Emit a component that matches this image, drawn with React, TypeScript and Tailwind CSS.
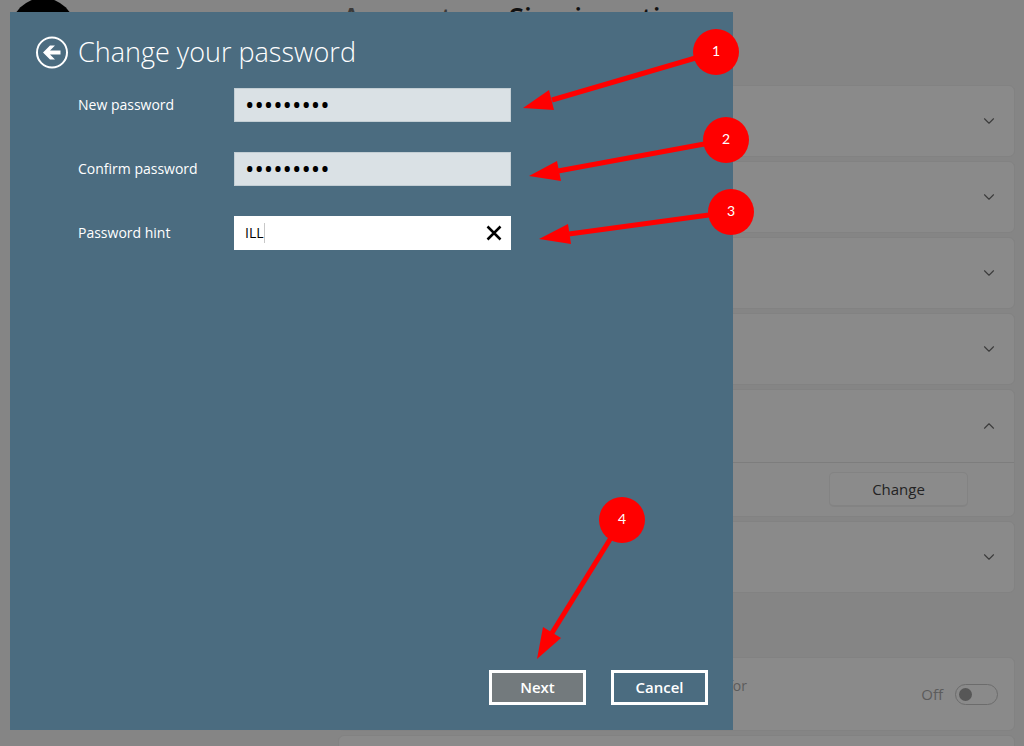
import { useState } from 'react';
import { ChevronDown, ChevronUp } from 'lucide-react';

const arrows = [
    { n: 1, cx: 716, cy: 52, x: 552, y: 100, head: '523,108 549,90 554,110' },
    { n: 2, cx: 726, cy: 140, x: 558, y: 171, head: '529,176 557,161 561,181' },
    { n: 3, cx: 731, cy: 212, x: 569, y: 234, head: '539,239 568,224 571,244' },
    { n: 4, cx: 622, cy: 520, x: 552, y: 633, head: '537,659 543,627 561,638' },
];

const card = 'rounded-md border border-[#828282] bg-[#8a8a8a]';
const passwordInput = 'h-[34px] w-[277px] border border-[#c3ced4] bg-[#dae1e5] px-[10px] text-[25px] text-black outline-none';

function Row({ open = false }: { open?: boolean }) {
    const Icon = open ? ChevronUp : ChevronDown;
    return (
        <div className={`flex items-center justify-end pr-4 ${open ? 'h-[72px]' : 'h-[70px]'}`}>
            <button type="button" aria-label={open ? 'Collapse' : 'Expand'}>
                <Icon className="size-[18px] text-[#3c3c3c]" strokeWidth={1.5} />
            </button>
        </div>
    );
}

function SettingsPage() {
    return (
        <div className="flex min-h-screen bg-[#858585] text-[#232323]">
            <aside className="w-[338px] shrink-0 pl-[11px]">
                <div className="-mt-0.5 size-16 rounded-full bg-black" />
            </aside>
            <main className="min-w-0 flex-1 pr-[9px]">
                <h1 className="flex h-[85px] items-start gap-[43px] pl-1 text-[28px] leading-9 font-semibold">
                    <span className="text-[#3a3a3a]">Accounts</span>
                    <span className="text-[#111]">Sign-in options</span>
                </h1>
                <div className="flex flex-col gap-1">
                    <div className={card}><Row /></div>
                    <div className={card}><Row /></div>
                    <div className={card}><Row /></div>
                    <div className={card}><Row /></div>
                    <div className={card}>
                        <Row open />
                        <div className="flex justify-end border-t border-[#7d7d7d] py-[9px] pr-[46px]">
                            <button type="button" className="h-[35px] w-[139px] rounded-[5px] border border-b-2 border-[#838383] bg-[#8b8b8b] text-[15px]">
                                Change
                            </button>
                        </div>
                    </div>
                    <div className={card}><Row /></div>
                </div>
                <div className="mt-16 flex flex-col gap-1">
                    <div className={`${card} flex h-[74px] items-center`}>
                        <p className="w-[408px] pb-4 text-right text-sm text-[#5c5c5c]">for</p>
                        <label className="ml-auto flex items-center gap-3 pr-4 text-[15px] text-[#5c5c5c]">
                            Off
                            <input type="checkbox" role="switch" className="peer sr-only" />
                            <span className="flex h-[21px] w-[43px] items-center rounded-full border border-[#6c6c6c] px-[3px] peer-checked:justify-end">
                                <span className="size-[13px] rounded-full bg-[#575757]" />
                            </span>
                        </label>
                    </div>
                    <div className={`${card} h-[74px]`} />
                </div>
            </main>
        </div>
    );
}

function PasswordDialog() {
    const [password, setPassword] = useState('password1');
    const [confirm, setConfirm] = useState('password1');
    const [hint, setHint] = useState('ILL');

    return (
        <form className="absolute top-3 left-2.5 flex min-h-[718px] w-[723px] flex-col bg-[#4b6c80] px-[25px] pt-[22px] pb-[25px] text-sm text-white">
            <div className="flex items-center gap-[10px]">
                <button type="button" aria-label="Back">
                    <svg viewBox="0 0 33 33" className="size-[33px]" fill="none" stroke="currentColor">
                        <circle cx="17" cy="16.5" r="15" strokeWidth="2" />
                        <path d="M8 16.500 15 9.500h5l-5 5h10.500v4H15l5 5h-5z" fill="currentColor" stroke="none" />
                    </svg>
                </button>
                <h2 className="text-[27px] leading-9 font-light">Change your password</h2>
            </div>
            <div className="mt-[18px] flex flex-col gap-[30px] pl-[43px]">
                <div className="flex items-center">
                    <label htmlFor="new" className="w-[156px]">New password</label>
                    <input id="new" type="password" value={password} onChange={(e) => setPassword(e.target.value)} className={passwordInput} />
                </div>
                <div className="flex items-center">
                    <label htmlFor="confirm" className="w-[156px]">Confirm password</label>
                    <input id="confirm" type="password" value={confirm} onChange={(e) => setConfirm(e.target.value)} className={passwordInput} />
                </div>
                <div className="flex items-center">
                    <label htmlFor="hint" className="w-[156px]">Password hint</label>
                    <div className="flex h-[34px] w-[277px] items-center bg-white pr-[9px] pl-[11px] text-black">
                        <input id="hint" value={hint} onChange={(e) => setHint(e.target.value)} className="field-sizing-content border-r border-[#c8c8c8] outline-none" />
                        <button type="button" aria-label="Clear" onClick={() => setHint('')} className="ml-auto">
                            <svg viewBox="0 0 16 16" className="size-4" stroke="currentColor" strokeWidth="2.500">
                                <path d="M1.500 1.500l13 13M14.500 1.500l-13 13" />
                            </svg>
                        </button>
                    </div>
                </div>
            </div>
            <div className="mt-auto flex justify-end gap-[25px] text-[15px] font-semibold">
                <button type="button" className="h-[35px] w-[97px] border-[3px] border-white bg-[#737a7d]">Next</button>
                <button type="button" className="h-[35px] w-[97px] border-[3px] border-white">Cancel</button>
            </div>
        </form>
    );
}

export default function App() {
    return (
        <div className="relative h-screen overflow-hidden font-['Open_Sans','Noto_Sans',sans-serif]">
            <SettingsPage />
            <PasswordDialog />
            <svg className="pointer-events-none absolute top-0 left-0" width="1024" height="746" fill="red">
                {arrows.map((a) => (
                    <g key={a.n}>
                        <line x1={a.cx} y1={a.cy} x2={a.x} y2={a.y} stroke="red" strokeWidth="5" />
                        <polygon points={a.head} />
                        <circle cx={a.cx} cy={a.cy} r="23" />
                        <text x={a.cx} y={a.cy + 4} textAnchor="middle" fill="white" className="font-['Lato',sans-serif] text-sm">{a.n}</text>
                    </g>
                ))}
            </svg>
        </div>
    );
}
